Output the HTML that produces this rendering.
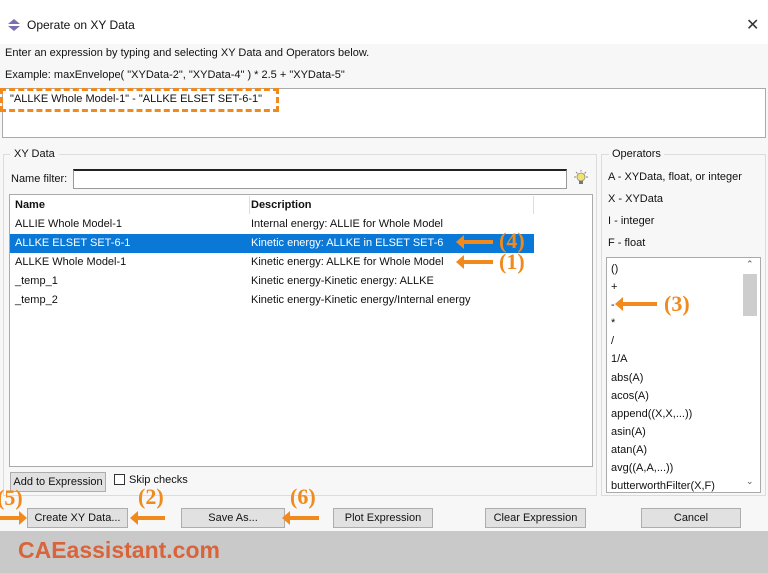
<!DOCTYPE html>
<html><head><meta charset="utf-8"><style>
*{margin:0;padding:0;box-sizing:border-box}
body{width:768px;height:573px;overflow:hidden;background:#f7f7f7;font-family:"Liberation Sans",sans-serif;font-size:11px;color:#111;position:relative}
.a{position:absolute;white-space:nowrap}
.btn{position:absolute;background:#e1e1e1;border:1px solid #adadad;text-align:center;line-height:18px;font-size:11px}
.grp{position:absolute;border:1px solid #dcdcdc}
.arrow{position:absolute;height:4px;background:#f08a1c}
.arrow:before{content:"";position:absolute;left:-7px;top:-5px;border-right:8px solid #f08a1c;border-top:7px solid transparent;border-bottom:7px solid transparent}
.arr{position:absolute;height:4px;background:#f08a1c}
.arr:after{content:"";position:absolute;right:-7px;top:-5px;border-left:8px solid #f08a1c;border-top:7px solid transparent;border-bottom:7px solid transparent}
.num{position:absolute;font-family:"Liberation Serif",serif;font-weight:bold;font-size:22px;color:#f08a1c}
</style></head><body>
<div class="a" style="left:0;top:0;width:768px;height:44px;background:#fff"></div>
<svg class="a" style="left:7px;top:18px" width="14" height="14"><path d="M7 1 L13 6 H1 Z" fill="#7a6fb0"/><path d="M7 13 L13 8 H1 Z" fill="#7a6fb0"/></svg>
<div class="a" style="left:27px;top:18px;font-size:12px">Operate on XY Data</div>
<div class="a" style="left:746px;top:15px;font-size:16px;color:#333">✕</div>
<div class="a" style="left:5px;top:47px">Enter an expression by typing and selecting XY Data and Operators below.</div>
<div class="a" style="left:5px;top:69px">Example: maxEnvelope( "XYData-2", "XYData-4" ) * 2.5 + "XYData-5"</div>
<div class="a" style="left:2px;top:88px;width:764px;height:50px;background:#fff;border:1px solid #aaa"></div>
<div class="a" style="left:0;top:88px;width:279px;height:24px;border:3px dashed #f08a1c"></div>
<div class="a" style="left:10px;top:93px">"ALLKE Whole Model-1" - "ALLKE ELSET SET-6-1"</div>

<div class="grp" style="left:3px;top:154px;width:594px;height:342px"></div>
<div class="a" style="left:10px;top:148px;background:#f7f7f7;padding:0 4px">XY Data</div>
<div class="a" style="left:11px;top:173px">Name filter:</div>
<div class="a" style="left:73px;top:169px;width:494px;height:20px;background:#fff;border:1px solid #999;border-top:2px solid #222"></div>
<svg class="a" style="left:573px;top:170px" width="16" height="16"><circle cx="8" cy="7" r="4" fill="#f3e36a" stroke="#888" stroke-width=".8"/><rect x="6" y="11" width="4" height="3" fill="#777"/><path d="M1 7h2M13 7h2M3 2l1.5 1.5M13 2l-1.5 1.5M8 0v1.5" stroke="#888"/></svg>
<div class="a" style="left:9px;top:194px;width:584px;height:273px;background:#fff;border:1px solid #aaa"></div>
<div class="a" style="left:249px;top:196px;width:1px;height:18px;background:#ddd"></div>
<div class="a" style="left:533px;top:196px;width:1px;height:18px;background:#ddd"></div>
<div class="a" style="left:15px;top:199px;font-weight:bold">Name</div>
<div class="a" style="left:251px;top:199px;font-weight:bold">Description</div>
<div class="a" style="left:10px;top:234px;width:524px;height:19px;background:#0a78d7"></div>
<div class="a" style="left:15px;top:218px">ALLIE Whole Model-1</div><div class="a" style="left:251px;top:218px">Internal energy: ALLIE for Whole Model</div>
<div class="a" style="left:15px;top:237px;color:#fff">ALLKE ELSET SET-6-1</div><div class="a" style="left:251px;top:237px;color:#fff">Kinetic energy: ALLKE in ELSET SET-6</div>
<div class="a" style="left:15px;top:256px">ALLKE Whole Model-1</div><div class="a" style="left:251px;top:256px">Kinetic energy: ALLKE for Whole Model</div>
<div class="a" style="left:15px;top:275px">_temp_1</div><div class="a" style="left:251px;top:275px">Kinetic energy-Kinetic energy: ALLKE</div>
<div class="a" style="left:15px;top:294px">_temp_2</div><div class="a" style="left:251px;top:294px">Kinetic energy-Kinetic energy/Internal energy</div>
<div class="arrow" style="left:463px;top:240px;width:30px"></div><div class="num" style="left:499px;top:228px">(4)</div>
<div class="arrow" style="left:463px;top:260px;width:30px"></div><div class="num" style="left:499px;top:249px">(1)</div>
<div class="btn" style="left:10px;top:472px;width:96px;height:20px">Add to Expression</div>
<div class="a" style="left:114px;top:474px;width:11px;height:11px;border:1px solid #333;background:#fff"></div>
<div class="a" style="left:129px;top:474px">Skip checks</div>

<div class="grp" style="left:601px;top:154px;width:165px;height:342px"></div>
<div class="a" style="left:609px;top:148px;background:#f7f7f7;padding:0 3px">Operators</div>
<div class="a" style="left:608px;top:171px">A - XYData, float, or integer</div>
<div class="a" style="left:608px;top:193px">X - XYData</div>
<div class="a" style="left:608px;top:215px">I - integer</div>
<div class="a" style="left:608px;top:237px">F - float</div>
<div class="a" style="left:606px;top:257px;width:155px;height:236px;background:#fff;border:1px solid #aaa"></div>
<div class="a" style="left:743px;top:274px;width:14px;height:42px;background:#cdcdcd"></div>
<div class="a" style="left:746px;top:259px;font-size:9px;color:#555">⌃</div>
<div class="a" style="left:746px;top:476px;font-size:9px;color:#555">⌄</div>
<div class="a" style="left:611px;top:260px;line-height:18.1px">()<br>+<br>-<br>*<br>/<br>1/A<br>abs(A)<br>acos(A)<br>append((X,X,...))<br>asin(A)<br>atan(A)<br>avg((A,A,...))<br>butterworthFilter(X,F)</div>
<div class="arrow" style="left:622px;top:302px;width:35px"></div><div class="num" style="left:664px;top:291px">(3)</div>

<div class="btn" style="left:27px;top:508px;width:101px;height:20px">Create XY Data...</div>
<div class="btn" style="left:181px;top:508px;width:104px;height:20px">Save As...</div>
<div class="btn" style="left:333px;top:508px;width:100px;height:20px">Plot Expression</div>
<div class="btn" style="left:485px;top:508px;width:101px;height:20px">Clear Expression</div>
<div class="btn" style="left:641px;top:508px;width:100px;height:20px">Cancel</div>
<div class="num" style="left:-3px;top:485px">(5)</div>
<div class="arr" style="left:0;top:516px;width:20px"></div>
<div class="num" style="left:138px;top:484px">(2)</div>
<div class="arrow" style="left:137px;top:516px;width:28px"></div>
<div class="num" style="left:290px;top:484px">(6)</div>
<div class="arrow" style="left:289px;top:516px;width:30px"></div>

<div class="a" style="left:0;top:531px;width:768px;height:42px;background:#c9c9c9"></div>
<div class="a" style="left:18px;top:537px;font-size:23px;font-weight:bold;color:#d9643a">CAEassistant.com</div>
</body></html>
